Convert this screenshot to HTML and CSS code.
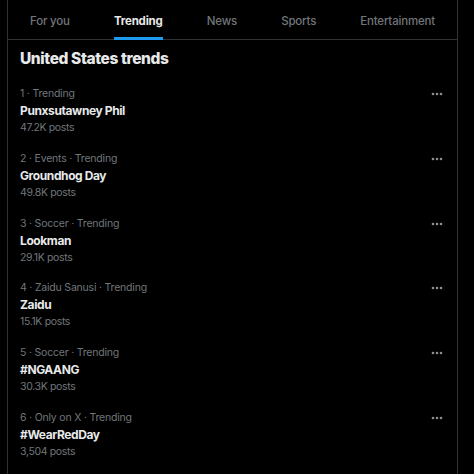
FILE: index.html
```html
<!DOCTYPE html>
<html>
<head>
<meta charset="utf-8">
<link rel="stylesheet" href="styles.css">
</head>
<body>
<div class="column">
  <nav class="tabs">
    <div class="tab"><span class="tab-label">For you</span></div>
    <div class="tab active"><span class="tab-label">Trending</span></div>
    <div class="tab"><span class="tab-label">News</span></div>
    <div class="tab"><span class="tab-label">Sports</span></div>
    <div class="tab"><span class="tab-label">Entertainment</span></div>
  </nav>
  <h2 class="heading">United States trends</h2>
  <div class="trend">
    <div class="trend-text">
      <div class="meta">1 · Trending</div>
      <div class="title">Punxsutawney Phil</div>
      <div class="posts">47.2K posts</div>
    </div>
    <svg class="more" viewBox="0 0 12 4" width="12" height="4"><circle cx="2" cy="2" r="1.3"/><circle cx="6" cy="2" r="1.3"/><circle cx="10" cy="2" r="1.3"/></svg>
  </div>
  <div class="trend">
    <div class="trend-text">
      <div class="meta">2 · Events · Trending</div>
      <div class="title">Groundhog Day</div>
      <div class="posts">49.8K posts</div>
    </div>
    <svg class="more" viewBox="0 0 12 4" width="12" height="4"><circle cx="2" cy="2" r="1.3"/><circle cx="6" cy="2" r="1.3"/><circle cx="10" cy="2" r="1.3"/></svg>
  </div>
  <div class="trend">
    <div class="trend-text">
      <div class="meta">3 · Soccer · Trending</div>
      <div class="title">Lookman</div>
      <div class="posts">29.1K posts</div>
    </div>
    <svg class="more" viewBox="0 0 12 4" width="12" height="4"><circle cx="2" cy="2" r="1.3"/><circle cx="6" cy="2" r="1.3"/><circle cx="10" cy="2" r="1.3"/></svg>
  </div>
  <div class="trend">
    <div class="trend-text">
      <div class="meta">4 · Zaidu Sanusi · Trending</div>
      <div class="title">Zaidu</div>
      <div class="posts">15.1K posts</div>
    </div>
    <svg class="more" viewBox="0 0 12 4" width="12" height="4"><circle cx="2" cy="2" r="1.3"/><circle cx="6" cy="2" r="1.3"/><circle cx="10" cy="2" r="1.3"/></svg>
  </div>
  <div class="trend">
    <div class="trend-text">
      <div class="meta">5 · Soccer · Trending</div>
      <div class="title">#NGAANG</div>
      <div class="posts">30.3K posts</div>
    </div>
    <svg class="more" viewBox="0 0 12 4" width="12" height="4"><circle cx="2" cy="2" r="1.3"/><circle cx="6" cy="2" r="1.3"/><circle cx="10" cy="2" r="1.3"/></svg>
  </div>
  <div class="trend">
    <div class="trend-text">
      <div class="meta">6 · Only on X · Trending</div>
      <div class="title">#WearRedDay</div>
      <div class="posts">3,504 posts</div>
    </div>
    <svg class="more" viewBox="0 0 12 4" width="12" height="4"><circle cx="2" cy="2" r="1.3"/><circle cx="6" cy="2" r="1.3"/><circle cx="10" cy="2" r="1.3"/></svg>
  </div>
</div>
</body>
</html>
```
FILE: styles.css
```css
html, body {
  margin: 0;
  padding: 0;
  background: #000;
}
body {
  font-family: Inter, "Noto Sans", "DejaVu Sans", sans-serif;
  color: #e7e9ea;
  height: 474px;
  overflow: hidden;
}
.column {
  margin-left: 7px;
  width: 449px;
  min-height: 474px;
  border-left: 1px solid #2f3336;
  border-right: 1px solid #2f3336;
}
.tabs {
  display: flex;
  height: 40px;
  border-bottom: 1px solid #2f3336;
  box-sizing: border-box;
}
.tab {
  flex: 1 1 auto;
  padding: 0 16px;
  display: flex;
  justify-content: center;
}
.tab-label {
  display: flex;
  align-items: center;
  height: 40px;
  box-sizing: border-box;
  font-size: 11.5px;
  letter-spacing: -0.2px;
  color: #71767b;
  font-weight: 500;
  padding-top: 2px;
}
.tab.active .tab-label {
  color: #e7e9ea;
  font-weight: 700;
  border-bottom: 3px solid #1d9bf0;
  padding-top: 5px;
}
.heading {
  margin: 0;
  padding: 9px 12px;
  font-size: 15.5px;
  line-height: 20px;
  font-weight: 800;
  letter-spacing: -0.4px;
}
.trend {
  display: flex;
  justify-content: space-between;
  align-items: flex-start;
  padding: 8px 14px 7px 12px;
}
.trend + .trend {
  margin-top: -0.2px;
}
.meta {
  font-size: 10.5px;
  line-height: 16px;
  letter-spacing: -0.2px;
  color: #71767b;
}
.title {
  font-size: 12px;
  line-height: 17px;
  font-weight: 700;
  letter-spacing: -0.4px;
  color: #e7e9ea;
}
.posts {
  font-size: 10.5px;
  line-height: 17px;
  letter-spacing: -0.35px;
  color: #71767b;
}
.more {
  margin-top: 6px;
  fill: #8b8f94;
}
```
